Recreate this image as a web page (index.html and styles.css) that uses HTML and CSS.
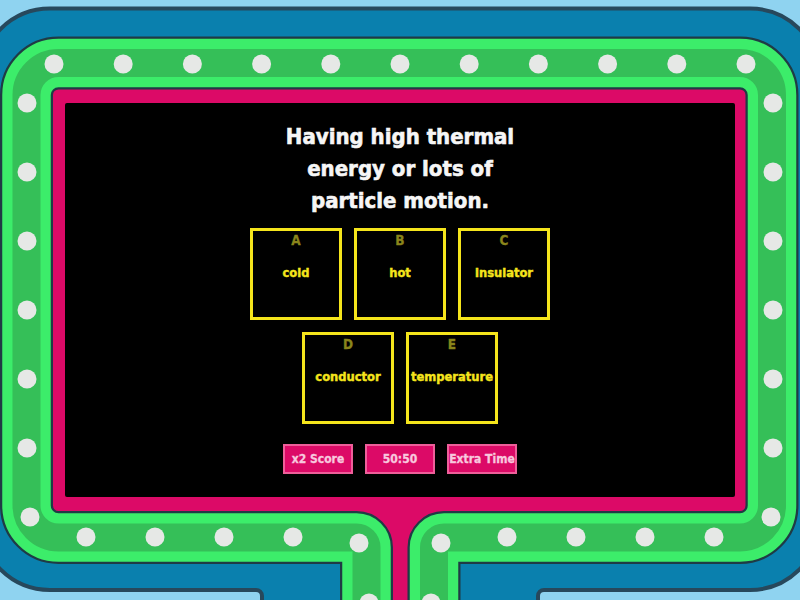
FILE: index.html
```html
<!DOCTYPE html>
<html lang="en">
<head>
<meta charset="utf-8">
<title>Quiz Show</title>
<link rel="stylesheet" href="styles.css">
</head>
<body>
<div class="stage">
  <svg class="frame" width="800" height="600" viewBox="0 0 800 600" aria-hidden="true">
    <defs>
      <path id="band" d="M 26.5,95 A32,32 0 0 1 58.5,63 L 740,63 A32,32 0 0 1 772,95 L 772,505.5 A32,32 0 0 1 740,537.5 L 444,537.5 A10,10 0 0 0 434,547.5 L 434,660 L 366.5,660 L 366.5,547.5 A10,10 0 0 0 356.5,537.5 L 58.5,537.5 A32,32 0 0 1 26.5,505.5 Z"/>
    </defs>
    <path class="blue" d="M -20,78.5 A70,70 0 0 1 50,8.5 L 750,8.5 A70,70 0 0 1 820,78.5 L 820,520 A70,70 0 0 1 750,590 L 544,590 A6,6 0 0 0 538,596 L 538,640 L 262,640 L 262,596 A6,6 0 0 0 256,590 L 50,590 A70,70 0 0 1 -20,520 Z"/>
    <use href="#band" class="pink"/>
    <use href="#band" class="edge"/>
    <use href="#band" class="bright"/>
    <use href="#band" class="dark"/>
    <g class="dots">
      <circle cx="54" cy="64" r="9.5"/>
      <circle cx="123.2" cy="64" r="9.5"/>
      <circle cx="192.4" cy="64" r="9.5"/>
      <circle cx="261.6" cy="64" r="9.5"/>
      <circle cx="330.8" cy="64" r="9.5"/>
      <circle cx="400" cy="64" r="9.5"/>
      <circle cx="469.2" cy="64" r="9.5"/>
      <circle cx="538.4" cy="64" r="9.5"/>
      <circle cx="607.6" cy="64" r="9.5"/>
      <circle cx="676.8" cy="64" r="9.5"/>
      <circle cx="746" cy="64" r="9.5"/>
      <circle cx="27" cy="103" r="9.5"/>
      <circle cx="27" cy="172" r="9.5"/>
      <circle cx="27" cy="241" r="9.5"/>
      <circle cx="27" cy="310" r="9.5"/>
      <circle cx="27" cy="379" r="9.5"/>
      <circle cx="27" cy="448" r="9.5"/>
      <circle cx="30" cy="517" r="9.5"/>
      <circle cx="773" cy="103" r="9.5"/>
      <circle cx="773" cy="172" r="9.5"/>
      <circle cx="773" cy="241" r="9.5"/>
      <circle cx="773" cy="310" r="9.5"/>
      <circle cx="773" cy="379" r="9.5"/>
      <circle cx="773" cy="448" r="9.5"/>
      <circle cx="771" cy="517" r="9.5"/>
      <circle cx="86" cy="537" r="9.5"/>
      <circle cx="155" cy="537" r="9.5"/>
      <circle cx="224" cy="537" r="9.5"/>
      <circle cx="293" cy="537" r="9.5"/>
      <circle cx="359" cy="543" r="9.5"/>
      <circle cx="441" cy="543" r="9.5"/>
      <circle cx="507" cy="537" r="9.5"/>
      <circle cx="576" cy="537" r="9.5"/>
      <circle cx="645" cy="537" r="9.5"/>
      <circle cx="714" cy="537" r="9.5"/>
      <circle cx="369" cy="603" r="9.5"/>
      <circle cx="431" cy="603" r="9.5"/>
    </g>
  </svg>

  <main class="screen">
    <h1 class="question">Having high thermal energy or lots of particle motion.</h1>
    <div class="answers">
      <div class="row">
        <div class="box"><span class="letter">A</span><span class="answer">cold</span></div>
        <div class="box"><span class="letter">B</span><span class="answer">hot</span></div>
        <div class="box"><span class="letter">C</span><span class="answer">insulator</span></div>
      </div>
      <div class="row">
        <div class="box"><span class="letter">D</span><span class="answer">conductor</span></div>
        <div class="box"><span class="letter">E</span><span class="answer">temperature</span></div>
      </div>
    </div>
    <div class="powerups">
      <button class="pu">x2 Score</button>
      <button class="pu">50:50</button>
      <button class="pu">Extra Time</button>
    </div>
  </main>
</div>
</body>
</html>
```
FILE: styles.css
```css
* { box-sizing: border-box; }

html, body {
  margin: 0;
  padding: 0;
}

body {
  width: 800px;
  height: 600px;
  overflow: hidden;
  background: #8fd3f0;
  font-family: "DejaVu Sans Condensed", "DejaVu Sans", sans-serif;
  font-stretch: condensed;
}

.stage {
  position: relative;
  width: 800px;
  height: 600px;
  overflow: hidden;
  padding: 103px 65px 103px 65px;
}

.frame {
  position: absolute;
  left: 0;
  top: 0;
}

.blue { fill: #0a80ae; stroke: #27485c; stroke-width: 4; }
.pink { fill: #dc0a67; stroke: none; }
.edge { fill: none; stroke: #1f3b45; stroke-width: 53; }
.bright { fill: none; stroke: #3ced6a; stroke-width: 48.5; }
.dark { fill: none; stroke: #35bf58; stroke-width: 28; }
.dots circle { fill: #e6e8e6; }

.screen {
  position: relative;
  width: 670px;
  height: 394px;
  background: #000;
  border-radius: 2px;
  display: flex;
  flex-direction: column;
  align-items: center;
  padding-top: 18px;
}

.question {
  margin: 0;
  width: 260px;
  color: #f6f6f6;
  font-size: 22px;
  line-height: 32px;
  font-weight: 700;
  text-align: center;
  -webkit-text-stroke: 0.6px #f6f6f6;
}

.answers {
  margin-top: 11px;
  display: flex;
  flex-direction: column;
  align-items: center;
  gap: 12px;
}

.row {
  display: flex;
  gap: 12px;
}

.box {
  width: 92px;
  height: 92px;
  border: 3px solid #f5e51c;
  padding-top: 2px;
  display: flex;
  flex-direction: column;
  align-items: center;
}

.letter {
  font-size: 13.5px;
  line-height: 15px;
  font-weight: 700;
  color: #8a851b;
  -webkit-text-stroke: 0.3px #8a851b;
}

.answer {
  margin-top: 17px;
  font-size: 12.8px;
  line-height: 16px;
  font-weight: 700;
  color: #f5e51c;
  white-space: nowrap;
  -webkit-text-stroke: 0.4px #f5e51c;
}

.powerups {
  margin-top: 20px;
  display: flex;
  gap: 12px;
}

.pu {
  width: 70px;
  height: 30px;
  padding: 0;
  background: #dc0a67;
  border: 2px solid #ee5f9a;
  color: #f8c8de;
  font-family: inherit;
  font-stretch: condensed;
  font-size: 12px;
  font-weight: 700;
  -webkit-text-stroke: 0.3px #f8c8de;
}
```
